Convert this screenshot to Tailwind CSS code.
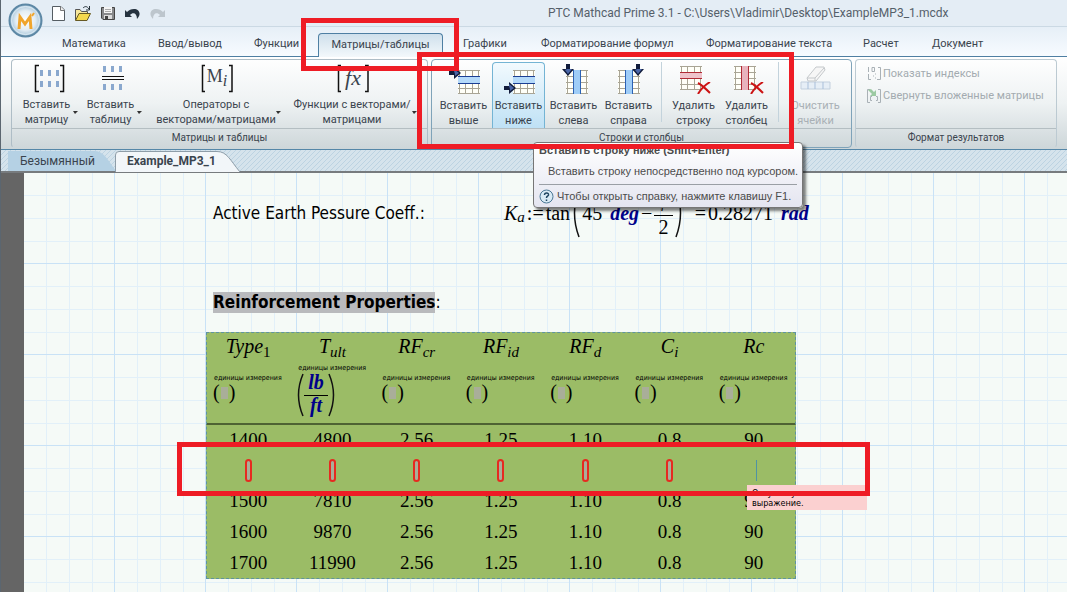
<!DOCTYPE html>
<html lang="ru">
<head>
  <meta charset="UTF-8" />
  <meta name="viewport" content="width=device-width, initial-scale=1.0"/>
  <title>PTC Mathcad Prime 3.1</title>
  <script src="https://cdn.jsdelivr.net/npm/@tailwindcss/browser@4"></script>
</head>
<body class="h-screen overflow-hidden flex flex-col border-l border-[#5b6670] bg-[#f5faf7] font-['Roboto','Noto_Sans',sans-serif] text-[11px] text-[#3a444e]">

  <!-- shared icon parts -->
  <svg class="absolute h-0 w-0">
    <defs>
      <pattern id="hatch" width="5" height="5" patternUnits="userSpaceOnUse"><path d="M0 5L5 0" stroke="#bcd3e2" stroke-width="1"/></pattern>
      <symbol id="grid" viewBox="0 0 24 26">
        <rect x="1" y="1" width="22" height="24" fill="#fffff8"/>
        <path d="M1 1.500H23M1 7.500H23M1 13.500H23M1 19.500H23M1 24.500H23M2.500 1V25M8.500 1V25M15.500 1V25M21.500 1V25" stroke="#a9a595" fill="none"/>
      </symbol>
      <symbol id="arrow-right" viewBox="0 0 13 14"><path d="M0 5H5V1L12 7L5 13V9H0Z" fill="#111c3c"/><path d="M5 5V3L10 7L6 10V8Z" fill="#4a66a8"/></symbol>
      <symbol id="arrow-down" viewBox="0 0 14 12"><path d="M5 0H9V5H13L7 12L1 5H5Z" fill="#111c3c"/><path d="M6 5H11L7 10L4 6Z" fill="#4a66a8"/></symbol>
      <symbol id="cross" viewBox="0 0 14 12"><path d="M1 1C5 3 9 7 13 11M13 0C8 3 4 7 1 12" stroke="#cc1414" stroke-width="2" fill="none"/></symbol>
    </defs>
  </svg>

  <header class="relative flex-none bg-[#e4edf5]">
    <!-- title bar -->
    <div class="flex h-[27px] items-center pl-[50px] border-b border-[#cbd9e4]">
      <button aria-label="Создать" class="w-[15px]">
        <svg width="15" height="17" viewBox="0 0 15 17"><path d="M1.500 1.500H10L13.500 5V15.500H1.500Z" fill="#fff" stroke="#555d63"/><path d="M9.500 1.500V5.500H13.500" fill="#eee" stroke="#777"/></svg>
      </button>
      <button aria-label="Открыть" class="ml-2 w-[18px]">
        <svg width="18" height="17" viewBox="0 0 18 17"><path d="M1.500 15V4.500H6L7.500 6.500H13.500V9" fill="#f7e79b" stroke="#555"/><path d="M1.500 15.500L5 8.500H16.500L13 15.500Z" fill="#f5d94e" stroke="#665a24"/><path d="M9 3C11 1 13 1 15 4M15.500 1V5H12" fill="none" stroke="#27333b"/></svg>
      </button>
      <button aria-label="Сохранить" class="ml-2 w-4">
        <svg width="16" height="15" viewBox="0 0 16 15"><path d="M1.500 1.500H14.500V13.500H3L1.500 12Z" fill="#88898b" stroke="#444"/><path d="M4 1H12V7H4Z" fill="#f5f5f5"/><path d="M5 3.500H11M5 5.500H11" stroke="#aaa"/><path d="M4 9H12V13H4Z" fill="#ddd"/><path d="M5 10H8V13H5Z" fill="#444"/></svg>
      </button>
      <button aria-label="Отменить" class="ml-2 w-[17px]">
        <svg width="17" height="13" viewBox="0 0 17 13"><path d="M1 3L1 10L8 10L6 8C9 5 13 6 13 12C18 7 15 2 10 2C7 2 5 3 3 5Z" fill="#26333f"/></svg>
      </button>
      <button aria-label="Вернуть" class="ml-2 w-[17px]">
        <svg width="17" height="13" viewBox="0 0 17 13"><path d="M16 3L16 10L9 10L11 8C8 5 4 6 4 12C-1 7 2 2 7 2C10 2 12 3 14 5Z" fill="#bdc6cd"/></svg>
      </button>
      <h1 class="flex-1 pl-[382px] text-[12px] text-[#55606a] whitespace-nowrap">PTC Mathcad Prime 3.1 - C:\Users\Vladimir\Desktop\ExampleMP3_1.mcdx</h1>
    </div>

    <!-- ribbon tabs -->
    <nav class="flex h-[30px] items-end pl-[44px] border-b border-[#4e7fa3] bg-gradient-to-b from-[#e6eff7] to-[#f7fbff] whitespace-nowrap">
      <a href="#" class="w-24 h-6 pl-[17px] leading-6">Математика</a>
      <a href="#" class="w-24 h-6 pl-[17px] leading-6">Ввод/вывод</a>
      <a href="#" class="w-[81px] h-6 pl-[17px] leading-6">Функции</a>
      <a href="#" class="relative w-[125px] h-6 -mb-px rounded-t border border-b-0 border-[#4e7fa3] bg-gradient-to-b from-[#cfe0ec] to-[#f3f8fb] text-center leading-[22px]">Матрицы/таблицы
        <span class="absolute z-30 -left-[18px] -top-4 w-[158px] h-[53px] border-[5px] border-[#ee1c25]"></span>
      </a>
      <a href="#" class="w-[81px] h-6 pl-5 leading-6">Графики</a>
      <a href="#" class="w-[165px] h-6 pl-[17px] leading-6">Форматирование формул</a>
      <a href="#" class="w-[157px] h-6 pl-[17px] leading-6">Форматирование текста</a>
      <a href="#" class="w-[69px] h-6 pl-[17px] leading-6">Расчет</a>
      <a href="#" class="h-6 pl-[17px] leading-6">Документ</a>
    </nav>

    <!-- application button -->
    <button aria-label="Меню" class="absolute left-[7px] top-[3px]">
      <svg width="35" height="35" viewBox="0 0 35 35">
        <defs><radialGradient id="orb"><stop offset="0" stop-color="#fff"/><stop offset=".6" stop-color="#e3edf4"/><stop offset="1" stop-color="#9fc0d6"/></radialGradient></defs>
        <circle cx="17.500" cy="17.500" r="16" fill="url(#orb)" stroke="#5d88a5" stroke-width="2"/>
        <circle cx="17.500" cy="17.500" r="14" fill="none" stroke="#dceaf3"/>
        <path d="M11 26L12 14L17 21L22 14L23 26" fill="none" stroke="#f0a52c" stroke-width="3"/>
        <path d="M24 13L26 10" stroke="#f0a52c" stroke-width="2"/>
      </svg>
    </button>
  </header>

  <!-- ribbon -->
  <section class="flex flex-none gap-[3px] pl-2.5 pt-0.5 h-[93px] border-b border-[#5587a8] bg-gradient-to-b from-white via-[#eef2f3] to-[#cdd6d9] leading-[15px] whitespace-nowrap">
    <div class="flex h-[89px] w-[417px] flex-none flex-col rounded border border-[#aebdc6] border-b-transparent">
      <div class="flex h-[69px] pl-2 border-b border-[#b4bec2]">
        <button class="flex w-16 flex-col items-start pt-1">
          <svg class="ml-[14px]" width="31" height="29" viewBox="0 0 31 29"><path d="M5 1.500H1.500V27.500H5M26 1.500H29.500V27.500H26" fill="none" stroke="#111" stroke-width="1.500"/><path d="M6 6h3v6h-3zM14 6h3v6h-3zM22 6h3v6h-3zM6 17h3v6h-3zM14 17h3v6h-3zM22 17h3v6h-3z" fill="#8aa8ce"/></svg>
          <span class="flex items-center pt-1"><span class="w-[53px]">Вставить<br>матрицу</span><svg width="5" height="3"><path d="M0 0H5L2 3Z" fill="#333"/></svg></span>
        </button>
        <button class="flex w-[72px] flex-col items-start pt-1">
          <svg class="ml-[14px]" width="31" height="29" viewBox="0 0 31 29"><path d="M5 2h3v6h-3zM13 2h3v6h-3zM21 2h3v6h-3zM5 20h3v6h-3zM13 20h3v6h-3zM21 20h3v6h-3z" fill="#8aa8ce"/><path d="M4 12.500H26M4 15.500H26" stroke="#111"/></svg>
          <span class="flex items-center pt-1"><span class="w-[53px]">Вставить<br>таблицу</span><svg width="5" height="3"><path d="M0 0H5L2 3Z" fill="#333"/></svg></span>
        </button>
        <button class="flex w-[136px] flex-col items-start pt-1">
          <span class="ml-[45px] flex h-[29px] w-8 justify-between">
            <svg width="4" height="29"><path d="M4 1.500H1.500V27.500H4" fill="none" stroke="#111" stroke-width="1.500"/></svg>
            <span class="font-['Liberation_Serif',serif] text-[18px] leading-6">M<i class="relative top-1 text-[16px]">i</i></span>
            <svg width="4" height="29"><path d="M0 1.500H3V27.500H0" fill="none" stroke="#111" stroke-width="1.500"/></svg>
          </span>
          <span class="flex items-center pt-1"><span class="w-[120px]">Операторы с<br>векторами/матрицами</span><svg width="5" height="3"><path d="M0 0H5L2 3Z" fill="#333"/></svg></span>
        </button>
        <button class="flex flex-col items-start pt-1">
          <span class="ml-[45px] flex h-[29px] w-8 justify-between">
            <svg width="4" height="29"><path d="M4 1.500H1.500V27.500H4" fill="none" stroke="#111" stroke-width="1.500"/></svg>
            <i class="font-['Liberation_Serif',serif] text-[22px] leading-7">fx</i>
            <svg width="4" height="29"><path d="M0 1.500H3V27.500H0" fill="none" stroke="#111" stroke-width="1.500"/></svg>
          </span>
          <span class="flex items-center pt-1"><span class="w-[120px]">Функции с векторами/<br>матрицами</span><svg width="5" height="3"><path d="M0 0H5L2 3Z" fill="#333"/></svg></span>
        </button>
      </div>
      <h2 class="text-center leading-[18px] text-[10px]">Матрицы и таблицы</h2>
    </div>

    <div class="relative flex h-[89px] w-[421px] flex-none flex-col rounded border border-[#7fa3b9]">
      <div class="flex h-[69px] gap-0.5 pl-[5px] pt-0.5 border-b border-[#b4bec2]">
        <button class="flex h-[66px] w-[53px] flex-col items-center">
          <svg width="34" height="33" viewBox="0 0 34 33"><use href="#grid" x="10" y="7" width="24" height="26"/><path d="M11 14H33V21H11Z" fill="#b5dafa"/><path d="M11 14.500H33M11 21.500H33" stroke="#1b3f94"/><use href="#arrow-right" x="2" y="4" width="13" height="14"/></svg>
          <span class="pt-[3px]">Вставить<br>выше</span>
        </button>
        <button class="flex h-[66px] w-[53px] flex-col items-center rounded-t border border-[#74b4d4] border-b-0 bg-gradient-to-b from-[#f2fafe] to-[#bfe1f5]">
          <svg class="-mt-px" width="34" height="33" viewBox="0 0 34 33"><use href="#grid" x="10" y="7" width="24" height="26"/><path d="M11 14H33V21H11Z" fill="#b5dafa"/><path d="M11 14.500H33M11 21.500H33" stroke="#1b3f94"/><use href="#arrow-right" x="2" y="19" width="13" height="14"/></svg>
          <span class="pt-[3px]">Вставить<br>ниже</span>
        </button>
        <button class="flex h-[66px] w-[53px] flex-col items-center">
          <svg width="34" height="33" viewBox="0 0 34 33"><use href="#grid" x="8" y="7" width="24" height="26"/><path d="M16 8H23V32H16Z" fill="#9fcdf7"/><path d="M16.500 8V32M23.500 8V32" stroke="#2c62b4"/><use href="#arrow-down" x="4" y="2" width="14" height="12"/></svg>
          <span class="pt-[3px]">Вставить<br>слева</span>
        </button>
        <button class="flex h-[66px] w-[53px] flex-col items-center">
          <svg width="34" height="33" viewBox="0 0 34 33"><use href="#grid" x="5" y="7" width="24" height="26"/><path d="M13 8H20V32H13Z" fill="#9fcdf7"/><path d="M13.500 8V32M20.500 8V32" stroke="#2c62b4"/><use href="#arrow-down" x="19" y="2" width="14" height="12"/></svg>
          <span class="pt-[3px]">Вставить<br>справа</span>
        </button>
        <span class="mx-1 h-[60px] w-px bg-[#c3d3dc]"></span>
        <button class="flex h-[66px] w-[51px] flex-col items-center">
          <svg width="34" height="33" viewBox="0 0 34 33"><use href="#grid" x="2" y="3" width="24" height="26"/><path d="M3 10H25V16H3Z" fill="#efc3cb"/><path d="M3 10.500H25M3 16.500H25" stroke="#b02a35"/><use href="#cross" x="20" y="20" width="14" height="12"/></svg>
          <span class="pt-[3px]">Удалить<br>строку</span>
        </button>
        <button class="flex h-[66px] w-[51px] flex-col items-center">
          <svg width="34" height="33" viewBox="0 0 34 33"><use href="#grid" x="3" y="3" width="24" height="26"/><path d="M11 4H18V28H11Z" fill="#e9b3bd"/><path d="M11.500 4V28M18.500 4V28" stroke="#b02a35"/><use href="#cross" x="20" y="20" width="14" height="12"/></svg>
          <span class="pt-[3px]">Удалить<br>столбец</span>
        </button>
        <span class="ml-1 mr-2 h-[60px] w-px bg-[#c3d3dc]"></span>
        <button disabled class="flex h-[66px] w-[53px] flex-col items-center text-[#a9b0b5]">
          <svg width="34" height="33" viewBox="0 0 34 33"><path d="M2 20H31V27H2Z" fill="#e6eef6" stroke="#c3d0de"/><path d="M9 20V27M16 20V27M24 20V27" stroke="#a9bfda"/><path d="M8 16L17 5H25L26 8L17 19H9Z" fill="#f6f6f6" stroke="#c4c8cb"/><path d="M8 16H16L25 6M16 16V19" fill="none" stroke="#c4c8cb"/></svg>
          <span class="pt-[3px]">Очистить<br>ячейки</span>
        </button>
      </div>
      <h2 class="text-center leading-[18px] text-[10px]">Строки и столбцы</h2>
      <span class="absolute z-30 -left-[15px] -top-2 w-[377px] h-[97px] border-[5px] border-[#ee1c25]"></span>

      <!-- tooltip of the highlighted button -->
      <div role="tooltip" class="absolute z-20 left-[101px] top-[82px] w-[270px] h-[66px] rounded-sm border border-[#767676] bg-gradient-to-b from-white to-[#e4e5f0] px-[5px] shadow-[3px_3px_3px_rgba(0,0,0,0.5)] font-['Liberation_Sans',Arial,sans-serif] text-[11px] text-[#4c4c4c]">
        <p class="font-bold leading-[15px]">Вставить строку ниже (Shift+Enter)</p>
        <p class="pl-[9px] leading-[26px] border-b border-[#9a9fa5]">Вставить строку непосредственно под курсором.</p>
        <p class="flex h-[22px] items-center gap-[3px]"><svg width="15" height="15" viewBox="0 0 15 15"><circle cx="7.500" cy="7.500" r="6.500" fill="#d8eaf5" stroke="#4a7896"/><path d="M5.500 6C5.500 3 10 3.500 9.500 6C9 7.500 7.500 7 7.500 9M7.500 10.500V12" fill="none" stroke="#1e4460" stroke-width="1.500"/></svg>Чтобы открыть справку, нажмите клавишу F1.</p>
      </div>
    </div>

    <div class="flex h-[89px] w-[202px] flex-none flex-col rounded border border-[#bccad2] border-b-transparent text-[#a3abb0]">
      <div class="flex h-[69px] flex-col items-start gap-[7px] pl-2.5 pt-1.5 border-b border-[#b4bec2]">
        <button disabled class="flex items-center gap-px"><svg width="16" height="15" viewBox="0 0 16 15"><path d="M2.500 1V6M6 1.500H8.500V5.500H6ZM12 1.500H14.500V13.500H11M2.500 8V13.500H5M7 10h1M9 12h1M9 8h1" fill="none" stroke="#a9b1b6"/></svg>Показать индексы</button>
        <button disabled class="flex items-center gap-px"><svg width="16" height="15" viewBox="0 0 16 15"><path d="M4 1.500H1.500V14.500H4M12 1.500H14.500V14.500H12M6 8.500H4.500V12.500H6M10 8.500H11.500V12.500H10" fill="none" stroke="#a9b1b6"/><path d="M2 2L5 1L8 4L10 2V8H4L6 6Z" fill="#9ccaa2"/></svg>Свернуть вложенные матрицы</button>
      </div>
      <h2 class="text-center leading-[18px] text-[10px] text-[#3a444e]">Формат результатов</h2>
    </div>
  </section>

  <!-- worksheet tabs -->
  <nav class="relative flex h-[23px] flex-none items-end border-b-2 border-[#777b7e] bg-[#d5e3ec] text-[12px]">
    <svg class="absolute inset-0 h-full w-full"><rect width="100%" height="100%" fill="url(#hatch)"/></svg>
    <a href="#" class="relative h-5 w-[114px] pl-[19px] leading-5">
      <svg class="absolute left-[7px] top-0" width="108" height="20"><path d="M0 20V0H86C96 0 99 8 108 20Z" fill="#b5d1e4"/></svg>
      <span class="relative">Безымянный</span>
    </a>
    <a href="#" class="relative h-5 w-[125px] pl-3 leading-5 font-bold">
      <svg class="absolute left-0 top-0" width="125" height="21"><path d="M.5 21V4Q.5 .5 4 .5H102C112 .5 115 9 125 21" fill="#f2f6f9" stroke="#8e9da8"/></svg>
      <span class="relative">Example_MP3_1</span>
    </a>
  </nav>

  <!-- worksheet -->
  <main class="flex min-h-0 flex-1 text-black">
    <div class="w-[23px] flex-none bg-[#656565]"></div>
    <div class="flex-1 pl-[182px] bg-[linear-gradient(90deg,transparent_90px,#c9e2f6_90px),linear-gradient(180deg,transparent_90px,#c9e2f6_90px),linear-gradient(90deg,transparent_22px,#e2f0f9_22px,#e2f0f9_23px,transparent_23px,transparent_45px,#e2f0f9_45px,#e2f0f9_46px,transparent_46px,transparent_68px,#e2f0f9_68px,#e2f0f9_69px,transparent_69px),linear-gradient(180deg,transparent_22px,#e2f0f9_22px,#e2f0f9_23px,transparent_23px,transparent_45px,#e2f0f9_45px,#e2f0f9_46px,transparent_46px,transparent_68px,#e2f0f9_68px,#e2f0f9_69px,transparent_69px)] bg-[size:91px_91px]">

      <div class="flex h-[119px] items-start pl-[7px] pt-[22px]">
        <p class="w-[291px] font-['DejaVu_Sans_Condensed','Noto_Sans',sans-serif] text-[17px] leading-9">Active Earth Pessure Coeff.:</p>
        <div class="flex h-9 items-center font-['Liberation_Serif',serif] text-[20px] whitespace-nowrap">
          <i>K</i><sub class="text-[15px] italic">a</sub><span class="pl-0.5">:=</span><span class="pl-0.5">tan</span>
          <svg class="mx-0.5" width="8" height="50" viewBox="0 0 8 50"><path d="M7 1Q-2 25 7 49" fill="none" stroke="#111" stroke-width="1.500"/></svg>
          <span>45</span><b class="pl-2 italic text-[#00008b]">deg</b><span class="px-0.5">−</span>
          <span class="flex flex-col text-center leading-[23px]"><i class="border-b border-black px-1 pb-1">ϕ</i><span>2</span></span>
          <svg class="mx-0.5" width="8" height="50" viewBox="0 0 8 50"><path d="M1 1Q10 25 1 49" fill="none" stroke="#111" stroke-width="1.500"/></svg>
          <span class="pl-2.5">=</span><span class="pl-0.5">0.28271</span><b class="pl-2 italic text-[#00008b]">rad</b>
        </div>
      </div>

      <h2 class="h-10 pl-[7px] font-['DejaVu_Sans_Condensed','Noto_Sans',sans-serif] text-[17px] leading-[21px]"><b class="inline-block bg-[#b9babd]">Reinforcement Properties</b>:</h2>

      <div class="relative w-[590px]">
        <table class="w-full table-fixed border-collapse bg-[#9bbc66] text-center font-['Liberation_Serif',serif] text-[19px] outline-1 outline-dashed -outline-offset-1 outline-[#5f93a0]">
          <thead class="text-[20px]">
            <tr class="h-[92px] border-b-2 border-[#4e6233] align-top">
              <th class="p-0 font-normal"><i class="block h-[41px] leading-7">Type<sub class="not-italic text-[15px]">1</sub></i>
                <small class="block h-2.5 pl-2 text-left font-['DejaVu_Sans_Condensed',sans-serif] text-[7px] leading-[10px] whitespace-nowrap">единицы измерения</small>
                <span class="flex pl-[7px] leading-[18px]">(<span class="my-1 mx-px h-3 w-[7px] bg-[#a9ae99]"></span>)</span></th>
              <th class="p-0 font-normal"><i class="block h-[31px] leading-7">T<sub class="text-[15px]">ult</sub></i>
                <small class="block h-2.5 pl-2 text-left font-['DejaVu_Sans_Condensed',sans-serif] text-[7px] leading-[10px] whitespace-nowrap">единицы измерения</small>
                <span class="flex h-11 items-center pl-[7px] font-bold italic text-[#00008b]">
                  <svg width="7" height="44" viewBox="0 0 7 44"><path d="M6 1Q-3 22 6 43" fill="none" stroke="#111" stroke-width="1.500"/></svg>
                  <span class="flex flex-col leading-[18px]"><span class="border-b border-black px-1 pb-1">lb</span><span class="pb-1">ft</span></span>
                  <svg width="7" height="44" viewBox="0 0 7 44"><path d="M1 1Q10 22 1 43" fill="none" stroke="#111" stroke-width="1.500"/></svg>
                </span></th>
              <th class="p-0 font-normal"><i class="block h-[41px] leading-7">RF<sub class="text-[15px]">cr</sub></i>
                <small class="block h-2.5 pl-2 text-left font-['DejaVu_Sans_Condensed',sans-serif] text-[7px] leading-[10px] whitespace-nowrap">единицы измерения</small>
                <span class="flex pl-[7px] leading-[18px]">(<span class="my-1 mx-px h-3 w-[7px] bg-[#a9ae99]"></span>)</span></th>
              <th class="p-0 font-normal"><i class="block h-[41px] leading-7">RF<sub class="text-[15px]">id</sub></i>
                <small class="block h-2.5 pl-2 text-left font-['DejaVu_Sans_Condensed',sans-serif] text-[7px] leading-[10px] whitespace-nowrap">единицы измерения</small>
                <span class="flex pl-[7px] leading-[18px]">(<span class="my-1 mx-px h-3 w-[7px] bg-[#a9ae99]"></span>)</span></th>
              <th class="p-0 font-normal"><i class="block h-[41px] leading-7">RF<sub class="text-[15px]">d</sub></i>
                <small class="block h-2.5 pl-2 text-left font-['DejaVu_Sans_Condensed',sans-serif] text-[7px] leading-[10px] whitespace-nowrap">единицы измерения</small>
                <span class="flex pl-[7px] leading-[18px]">(<span class="my-1 mx-px h-3 w-[7px] bg-[#a9ae99]"></span>)</span></th>
              <th class="p-0 font-normal"><i class="block h-[41px] leading-7">C<sub class="text-[15px]">i</sub></i>
                <small class="block h-2.5 pl-2 text-left font-['DejaVu_Sans_Condensed',sans-serif] text-[7px] leading-[10px] whitespace-nowrap">единицы измерения</small>
                <span class="flex pl-[7px] leading-[18px]">(<span class="my-1 mx-px h-3 w-[7px] bg-[#a9ae99]"></span>)</span></th>
              <th class="p-0 font-normal"><i class="block h-[41px] leading-7">Rc</i>
                <small class="block h-2.5 pl-2 text-left font-['DejaVu_Sans_Condensed',sans-serif] text-[7px] leading-[10px] whitespace-nowrap">единицы измерения</small>
                <span class="flex pl-[7px] leading-[18px]">(<span class="my-1 mx-px h-3 w-[7px] bg-[#a9ae99]"></span>)</span></th>
            </tr>
          </thead>
          <tbody>
            <tr class="h-[31px]"><td>1400</td><td>4800</td><td>2.56</td><td>1.25</td><td>1.10</td><td>0.8</td><td>90</td></tr>
            <!-- freshly inserted row, caret in the last cell -->
            <tr class="h-[31px]">
              <td><span class="mx-auto block h-[23px] w-[7px] rounded border-2 border-[#e62a20] bg-[#a9ae99]"></span></td>
              <td><span class="mx-auto block h-[23px] w-[7px] rounded border-2 border-[#e62a20] bg-[#a9ae99]"></span></td>
              <td><span class="mx-auto block h-[23px] w-[7px] rounded border-2 border-[#e62a20] bg-[#a9ae99]"></span></td>
              <td><span class="mx-auto block h-[23px] w-[7px] rounded border-2 border-[#e62a20] bg-[#a9ae99]"></span></td>
              <td><span class="mx-auto block h-[23px] w-[7px] rounded border-2 border-[#e62a20] bg-[#a9ae99]"></span></td>
              <td><span class="mx-auto block h-[23px] w-[7px] rounded border-2 border-[#e62a20] bg-[#a9ae99]"></span></td>
              <td class="pl-1.5"><span class="mx-auto block h-[21px] w-px bg-[#4f93a3]"></span></td>
            </tr>
            <tr class="h-[31px]"><td>1500</td><td>7810</td><td>2.56</td><td>1.25</td><td>1.10</td><td>0.8</td><td>90</td></tr>
            <tr class="h-[31px]"><td>1600</td><td>9870</td><td>2.56</td><td>1.25</td><td>1.10</td><td>0.8</td><td>90</td></tr>
            <tr class="h-[31px]"><td>1700</td><td>11990</td><td>2.56</td><td>1.25</td><td>1.10</td><td>0.8</td><td>90</td></tr>
          </tbody>
        </table>
        <p class="absolute left-[541px] top-[153px] w-[120px] h-[25px] bg-[#fbd0d0] pl-[5px] pt-[3px] font-['DejaVu_Sans_Condensed',sans-serif] text-[9px] leading-[10px]">Отсутствует<br>выражение.</p>
        <span class="absolute z-30 -left-[29px] top-[110px] w-[693px] h-[54px] border-[5px] border-[#ee1c25]"></span>
      </div>
    </div>
  </main>
</body>
</html>
